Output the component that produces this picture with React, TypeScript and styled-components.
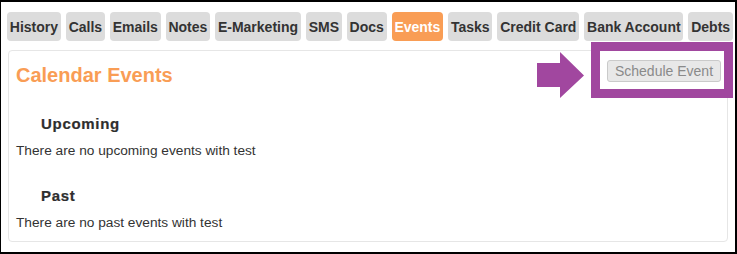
import React from "react";
import styled, { createGlobalStyle } from "styled-components";

const Global = createGlobalStyle`
  html, body { margin: 0; padding: 0; background: #fff; }
  body { font-family: "Liberation Sans", Arial, sans-serif; }
  * { box-sizing: border-box; }
`;

const Frame = styled.div`
  position: relative;
  width: 737px;
  height: 254px;
  border: 2px solid #000;
  border-left-width: 1px;
  padding: 10px 0 0 6px;
  background: #fff;
`;

const TabBar = styled.div`
  display: flex;
  gap: 5px;
  height: 29px;
`;

const Tab = styled.div<{ $active?: boolean }>`
  display: flex;
  align-items: center;
  height: 29px;
  padding: 0 2.8px;
  border-radius: 4px;
  font-size: 14px;
  font-weight: bold;
  color: ${(p) => (p.$active ? "#fff" : "#333")};
  background: ${(p) => (p.$active ? "#f99d55" : "#dcdcdc")};
  white-space: nowrap;
`;

const Panel = styled.div`
  margin: 9px 0 0 1px;
  width: 720px;
  height: 192px;
  border: 1px solid #e6e6e6;
  border-radius: 4px;
  padding: 9px 6px 0 7px;
`;

const TitleRow = styled.div`
  display: flex;
  justify-content: space-between;
  align-items: flex-start;
`;

const Title = styled.h2`
  margin: 3px 0 0 0;
  font-size: 20px;
  line-height: 24px;
  font-weight: bold;
  color: #f99d55;
`;

const Button = styled.button`
  height: 22px;
  width: 114px;
  padding: 0;
  border: 1px solid #cacaca;
  border-radius: 3px;
  background: #e8e8e8;
  color: #8a8a8a;
  font-family: "Liberation Sans", Arial, sans-serif;
  font-size: 14px;
  line-height: 20px;
`;

const Heading = styled.h4<{ $top: number }>`
  margin: ${(p) => p.$top}px 0 0 25px;
  font-size: 15px;
  line-height: 18px;
  font-weight: bold;
  letter-spacing: 0.7px;
  color: #2e2e2e;
  -webkit-text-stroke: 0.2px #2e2e2e;
`;

const Text = styled.p`
  margin: 9px 0 0 0;
  font-size: 13.7px;
  line-height: 18px;
  color: #333;
`;

const Highlight = styled.div`
  position: absolute;
  left: 590px;
  top: 40px;
  width: 142px;
  height: 56px;
  border: 9px solid #a1479f;
  pointer-events: none;
`;

const Arrow = styled.svg`
  position: absolute;
  left: 536px;
  top: 49px;
`;

const tabs = [
  "History",
  "Calls",
  "Emails",
  "Notes",
  "E-Marketing",
  "SMS",
  "Docs",
  "Events",
  "Tasks",
  "Credit Card",
  "Bank Account",
  "Debts",
];

export default function App() {
  return (
    <>
      <Global />
      <Frame>
        <TabBar>
          {tabs.map((t) => (
            <Tab key={t} $active={t === "Events"}>
              {t}
            </Tab>
          ))}
        </TabBar>
        <Panel>
          <TitleRow>
            <Title>Calendar Events</Title>
            <Button disabled>Schedule Event</Button>
          </TitleRow>
          <Heading $top={28}>Upcoming</Heading>
          <Text>There are no upcoming events with test</Text>
          <Heading $top={27}>Past</Heading>
          <Text>There are no past events with test</Text>
        </Panel>
        <Highlight />
        <Arrow width="48" height="48" viewBox="0 0 48 48">
          <polygon
            points="0,12 23,12 23,1 47,24.5 23,47 23,36 0,36"
            fill="#a1479f"
          />
        </Arrow>
      </Frame>
    </>
  );
}
